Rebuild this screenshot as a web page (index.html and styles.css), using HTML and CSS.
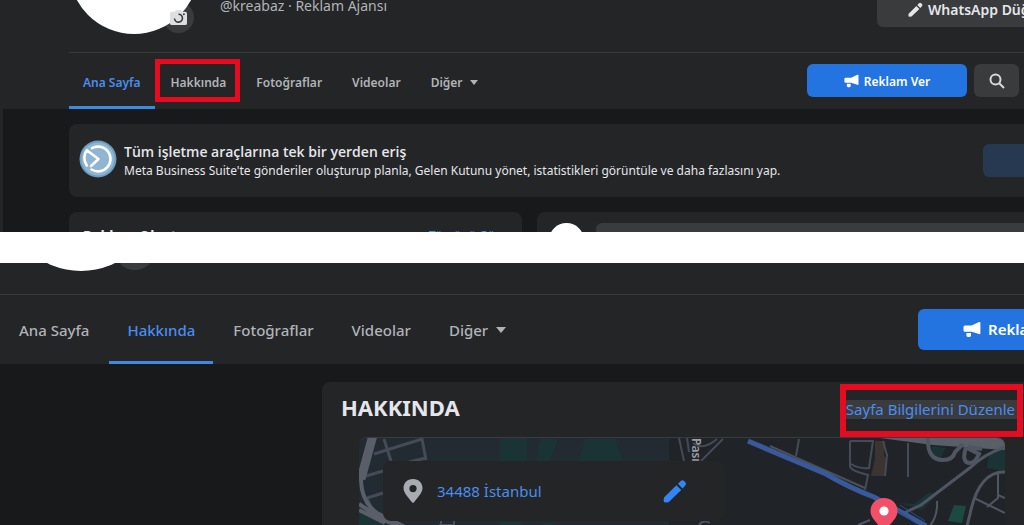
FILE: index.html
```html
<!DOCTYPE html>
<html lang="tr">
<head>
<meta charset="utf-8">
<meta name="viewport" content="width=device-width, initial-scale=1">
<title>Sayfa Bilgileri</title>
<link rel="stylesheet" href="styles.css">
</head>
<body>
<svg class="sprite" aria-hidden="true">
  <symbol id="horn" viewBox="0 0 18 16"><path d="M2 4h6.600L16 .6q1.400-.5 1.400.8v10.400q0 1.300-1.400.8L8.600 10.200H2Q.5 10.200.5 8.700V5.500Q.5 4 2 4zM3.400 11.400h4.600v2.400q0 1.600-1.400 1.600H5q-1.600 0-1.600-1.600z"/></symbol>
  <symbol id="pen" viewBox="0 0 24 24"><path d="M1 18.600 13.400 6.200l4.800 4.800L5.600 23.200 2.400 23.600Q.6 23.600.6 21.800zM14.900 4.700l2.800-2.800q1.600-1.500 3.300 0l1.300 1.300q1.700 1.700 0 3.400l-2.700 2.800z"/></symbol>
</svg>

<section class="panel home">
  <div class="profile">
    <div class="avatar"></div>
    <button class="camera" aria-label="Fotoğrafı güncelle">
      <svg viewBox="0 0 20 18"><path fill="#dedfe1" d="M3 3h3l1.500-2h5L14 3h3q2 0 2 2v10q0 2-2 2H3q-2 0-2-2V5q0-2 2-2z"/><path fill="none" stroke="#3a3b3d" stroke-width="1.700" d="M5.800 10a4.200 4.200 0 1 0 4.200-4.500"/><circle cx="15.700" cy="5.500" r="1" fill="#3a3b3d"/></svg>
    </button>
    <p class="handle">@kreabaz · Reklam Ajansı</p>
    <button class="whatsapp"><svg><use href="#pen"/></svg>WhatsApp Düğmesi Ekle</button>
  </div>
  <div class="bar">
    <nav class="tabs">
      <a class="tab active" href="#home">Ana Sayfa</a>
      <a class="tab marked" href="#about">Hakkında</a>
      <a class="tab" href="#photos">Fotoğraflar</a>
      <a class="tab" href="#videos">Videolar</a>
      <a class="tab" href="#more">Diğer<i class="caret"></i></a>
    </nav>
    <button class="promote"><svg><use href="#horn"/></svg>Reklam Ver</button>
    <button class="search" aria-label="Ara"><svg viewBox="0 0 16 16"><circle cx="6.500" cy="6.500" r="5" /><path d="m10.200 10.200 4.800 4.800"/></svg></button>
  </div>
  <div class="feed">
    <article class="suite">
      <svg class="suite-logo" viewBox="0 0 38 38"><circle cx="19" cy="19" r="18.500" fill="#6d9dc0"/><circle cx="19" cy="19" r="16.500" fill="#8fb5d2"/><path fill="none" stroke="#fff" stroke-width="2.600" stroke-linejoin="round" stroke-linecap="round" d="M7.800 25.500A13 13 0 0 1 7.800 10.200L19.500 19l-7.500 7M13 8.200A12.400 12.400 0 1 1 12.500 29.500"/></svg>
      <div class="suite-text">
        <h2>Tüm işletme araçlarına tek bir yerden eriş</h2>
        <p>Meta Business Suite'te gönderiler oluşturup planla, Gelen Kutunu yönet, istatistikleri görüntüle ve daha fazlasını yap.</p>
      </div>
      <button class="suite-open" aria-label="Aç"></button>
    </article>
    <div class="columns">
      <article class="ads"><h3>Reklam Oluştur</h3><a href="#all">Tümünü Gör</a></article>
      <article class="composer"><div class="me"></div><div class="field"></div></article>
    </div>
  </div>
</section>

<section class="panel about">
  <div class="profile">
    <div class="avatar"></div>
    <div class="camera"></div>
  </div>
  <div class="bar">
    <nav class="tabs">
      <a class="tab" href="#home">Ana Sayfa</a>
      <a class="tab active" href="#about">Hakkında</a>
      <a class="tab" href="#photos">Fotoğraflar</a>
      <a class="tab" href="#videos">Videolar</a>
      <a class="tab" href="#more">Diğer<i class="caret"></i></a>
    </nav>
    <button class="promote"><svg><use href="#horn"/></svg>Reklam Ver</button>
  </div>
  <article class="info">
    <header class="info-head">
      <h1>HAKKINDA</h1>
      <div class="edit"><a href="#edit">Sayfa Bilgilerini Düzenle</a></div>
    </header>
    <div class="map">
      <svg class="streets" viewBox="359 437 646 88" preserveAspectRatio="xMinYMin slice" aria-hidden="true">
        <path fill="#222a32" d="M359 437h310v88H359z"/>
        <g fill="#1a3435">
          <path d="M500 437h27v24h-27zM540 438h18l-8 22h-14zM585 438h30l8 22h-44zM359 510l20 6 8 9h-28zM989 452l16-6v24l-18-3zM500 521h22v4h-22zM542 522h14v3h-14z"/>
          <path d="M900 502l14 1 16-12 6 4-14 14zM932 445l14 2-6 10-8-3z"/>
        </g>
        <path fill="#1b4a42" d="M954 504l12 1-4 17-14-2z"/>
        <path fill="#3b3430" d="M875 440h10l-1 14 3 6-1 15h-15l4-17z"/>
        <g fill="none" stroke="#454b56" stroke-width="3">
          <path d="M374 453l48-15 4 21M384 438l7 22M409 461l17-4M366 475l17-5M367 497l16-5M367 497l6 14"/>
        </g>
        <g fill="none" stroke="#454b56" stroke-width="2">
          <path d="M679 437l5 23M687 437l2 14M701 460l22-22M693 442q10 8 24-4M799 438l-3 17"/>
          <path d="M850 440v26q2 4 18 8l-3 15M850 440h23l-4 27q-10 1-18-4M883 440l4 14-2 21M908 442v34"/>
        </g>
        <path fill="none" stroke="#595e69" stroke-width="9" d="M373 434l-12 44"/>
        <path fill="none" stroke="#595e69" stroke-width="4" d="M361 474q-1 26 16 38l30 15M359 503l24 16 22 8M359 509l26 13"/>
        <path fill="none" stroke="#4a4f5b" stroke-width="2" d="M439 524h16M441 520v5M454 520v5M699 524q4-6 11-2M770 445l45 20 50 22"/>
        <path fill="#595f69" d="M880 437h122l3 3v9l-72-5z"/>
        <g fill="none" stroke="#4f5662">
          <path stroke-width="4" d="M928 437q-1 22 15 22 10 0 12-8l8-8M966 446q-5 16 4 16 5 0 9-9l-12-6M968 446l14 2"/>
          <path stroke-width="3" d="M1005 446q-22 8-34 20l-50 38-17 8M1005 471q-26-1-35 42l-3 12"/>
          <path stroke-width="2" d="M974 497l31 15M998 473v24l-11 9M998 494l7 3M937 500q1 14-7 25M858 524l12-5"/>
        </g>
        <path fill="none" stroke="#39599a" stroke-width="5" d="M748 440l78 33q24 14 48 23l52 29"/>
        <path fill="none" stroke="#2a4b86" stroke-width="1" d="M895 508l22 15M900 504l25 16"/>
        <text class="street-name" transform="translate(692 437) rotate(90)">Pasın</text>
        <path fill="#f2506a" d="M884 497c-8 0-13.500 6-13.500 13 0 6 5 10 8.500 15h10c4-5 8.500-9 8.500-15 0-7-5.500-13-13.500-13z"/>
        <circle cx="884" cy="510" r="4.600" fill="#fff"/>
      </svg>
      <div class="address">
        <svg class="pin" viewBox="0 0 20 24"><path fill-rule="evenodd" d="M10 0C4 0 .5 4.200.5 9.200.5 14 6 19 9 23.200q1 1.200 2 0C14 19 19.500 14 19.500 9.200 19.500 4.200 16 0 10 0zm0 6a3.600 3.600 0 1 1 0 7.200A3.600 3.600 0 0 1 10 6z"/></svg>
        <a href="#address">34488 İstanbul</a>
        <button class="pen" aria-label="Adresi düzenle"><svg><use href="#pen"/></svg></button>
      </div>
    </div>
  </article>
</section>
</body>
</html>
```
FILE: styles.css
```css
* { box-sizing: border-box; }
body {
  margin: 0;
  height: 100vh;
  overflow: hidden;
  display: flex;
  flex-direction: column;
  gap: 31px;
  background: #fff;
  color: #e4e6eb;
  font-family: "Noto Sans", "Open Sans", sans-serif;
}
h1, h2, h3, p { margin: 0; }
a { color: inherit; text-decoration: none; }
button {
  border: 0;
  padding: 0;
  font: inherit;
  color: inherit;
  display: flex;
  align-items: center;
  justify-content: center;
  flex: none;
}
.sprite { position: absolute; width: 0; height: 0; }
.panel { background: #18191a; overflow: hidden; }
.profile {
  display: flex;
  align-items: flex-end;
  background: #242526;
  overflow: hidden;
}
.avatar { flex: none; z-index: 1; border-radius: 50%; background: #fff; }
.camera { flex: none; border-radius: 50%; background: #3a3b3d; }
.bar { display: flex; align-items: center; background: #242526; }
.tabs { display: flex; gap: 2px; align-self: stretch; margin-right: auto; }
.tab {
  position: relative;
  display: flex;
  align-items: center;
  color: #b0b3b8;
  font-weight: 600;
}
.tab.active { color: #4a8df0; }
.tab.active::after {
  content: "";
  position: absolute;
  left: 0;
  right: 0;
  bottom: 0;
  height: 3px;
  background: #3f8ae0;
}
.caret {
  border: 4px solid transparent;
  border-top: 5px solid #b0b3b8;
  border-bottom: 0;
  margin-left: 7px;
}
.promote { background: #2374e1; color: #fff; font-weight: 600; border-radius: 6px; }
.promote svg { fill: #fff; }

/* Home */
.home { flex: none; border-left: 3px solid #242526; }
.home .profile { height: 52px; padding-left: 66px; }
.home .avatar { width: 130px; height: 130px; margin-bottom: 18px; }
.home .camera { width: 31px; height: 31px; margin: 0 0 19px -36px; }
.camera svg { position: relative; z-index: 2; width: 19px; height: 17px; }
.handle { margin: 0 auto 40px 26px; font-size: 14px; line-height: 12px; color: #b0b3b8; }
.whatsapp {
  width: 230px;
  height: 40px;
  margin: 0 -83px 25px 0;
  padding: 4px 0 0 31px;
  gap: 5px;
  justify-content: flex-start;
  border-radius: 6px;
  background: #3a3b3c;
  font-size: 14px;
  font-weight: 600;
  white-space: nowrap;
}
.whatsapp svg { width: 15px; height: 15px; fill: #e4e6eb; flex: none; }
.home .bar { height: 57px; padding: 0 5px 0 66px; gap: 7px; position: relative; }
.home .bar::before, .about .bar::before {
  content: "";
  position: absolute;
  top: 0;
  right: 0;
  height: 1px;
  background: #393a3b;
}
.home .bar::before { left: 66px; }
.home .tab { padding: 3px 14px 0; font-size: 12px; }
.home .tab.marked::before {
  content: "";
  position: absolute;
  top: 7px;
  bottom: 7px;
  left: -2px;
  right: 0;
  border: 5px solid #e50c22;
}
.home .promote { width: 160px; height: 33px; gap: 5px; padding-top: 1px; font-size: 12px; }
.home .promote svg { width: 15px; height: 14px; }
.search { width: 45px; height: 33px; border-radius: 6px; background: #3a3b3c; }
.search svg { width: 16px; height: 16px; fill: none; stroke: #d6d8dc; stroke-width: 2; }
.feed { padding: 15px 0 0 66px; overflow: hidden; }
.suite {
  display: flex;
  align-items: center;
  height: 73px;
  margin: 0 -12px 15px 0;
  padding-left: 10px;
  background: #242526;
  border-radius: 8px;
}
.suite-logo { width: 38px; height: 38px; margin-bottom: 4px; flex: none; }
.suite-text { margin: 0 auto 0 7px; white-space: nowrap; }
.suite h2 { font-family: "Open Sans", sans-serif; font-size: 14px; line-height: 20px; font-weight: 600; }
.suite p { font-size: 12px; line-height: 18px; }
.suite-open { width: 53px; height: 33px; border-radius: 6px; background: #263951; }
.columns { display: grid; grid-template-columns: 453px 1fr; gap: 15px; height: 20px; margin-right: -12px; }
.ads, .composer {
  display: flex;
  align-items: flex-start;
  background: #242526;
  border-radius: 8px 8px 0 0;
  overflow: hidden;
}
.ads { justify-content: space-between; padding: 14px 22px 0 14px; }
.ads h3 { font-size: 14px; line-height: 20px; font-weight: 700; }
.ads a { font-size: 12px; line-height: 20px; color: #4a8df0; }
.composer { padding: 11px 0 0 12px; gap: 12px; }
.me { width: 35px; height: 35px; border-radius: 50%; background: #fff; flex: none; }
.field { flex: 1; height: 35px; border-radius: 6px 0 0 0; background: #3a3b3c; }

/* About */
.about { flex: 1; min-height: 0; }
.about .profile { height: 31px; padding-left: 5px; }
.about .avatar { width: 152px; height: 152px; margin-bottom: 23px; }
.about .camera { width: 40px; height: 40px; margin: 0 0 24px -42px; }
.about .bar { position: relative; height: 70px; padding-left: 1px; margin-right: -92px; }
.about .bar::before { left: 0; }
.about .tab { padding: 2px 18px 0; font-size: 15px; font-weight: 500; }
.about .caret { border-width: 6px 5px 0; margin-left: 8px; }
.about .promote { width: 198px; height: 41px; gap: 7px; font-size: 15px; }
.about .promote svg { width: 18px; height: 17px; }
.info {
  margin: 18px -16px 0 322px;
  padding: 0 35px 0 19px;
  border-radius: 8px;
  background: #242526;
}
.info-head { display: flex; align-items: center; justify-content: space-between; height: 55px; margin-right: -18px; }
.info h1 { padding-bottom: 5px; font-size: 22px; line-height: 30px; font-weight: 700; }
.edit {
  position: relative;
  z-index: 1;
  align-self: stretch;
  display: flex;
  align-items: center;
  margin-top: 2px;
  padding-bottom: 2px;
  border: 6px solid #e50c22;
}
.edit a { padding-right: 2px; background: #3a3b3c; color: #4a8df0; font-size: 15px; line-height: 19px; }
.map {
  position: relative;
  height: 120px;
  margin-left: 18px;
  border-radius: 8px;
  border-top: 1px solid #393b3f;
  background: #202428;
  overflow: hidden;
}
.streets { display: block; width: 100%; height: 88px; }
.street-name { font-size: 12px; font-weight: 600; fill: #9a9da3; }
.address {
  position: absolute;
  top: 23px;
  left: 24px;
  width: 342px;
  height: 60px;
  padding: 0 38px 0 20px;
  display: flex;
  align-items: center;
  background: #242526;
  border-radius: 8px;
  color: #4a8df0;
  font-size: 15px;
}
.pin { width: 20px; height: 24px; margin-right: 14px; fill: #a8abb2; }
.pen { margin-left: auto; background: none; }
.pen svg { width: 24px; height: 24px; fill: #3385f5; }
```
